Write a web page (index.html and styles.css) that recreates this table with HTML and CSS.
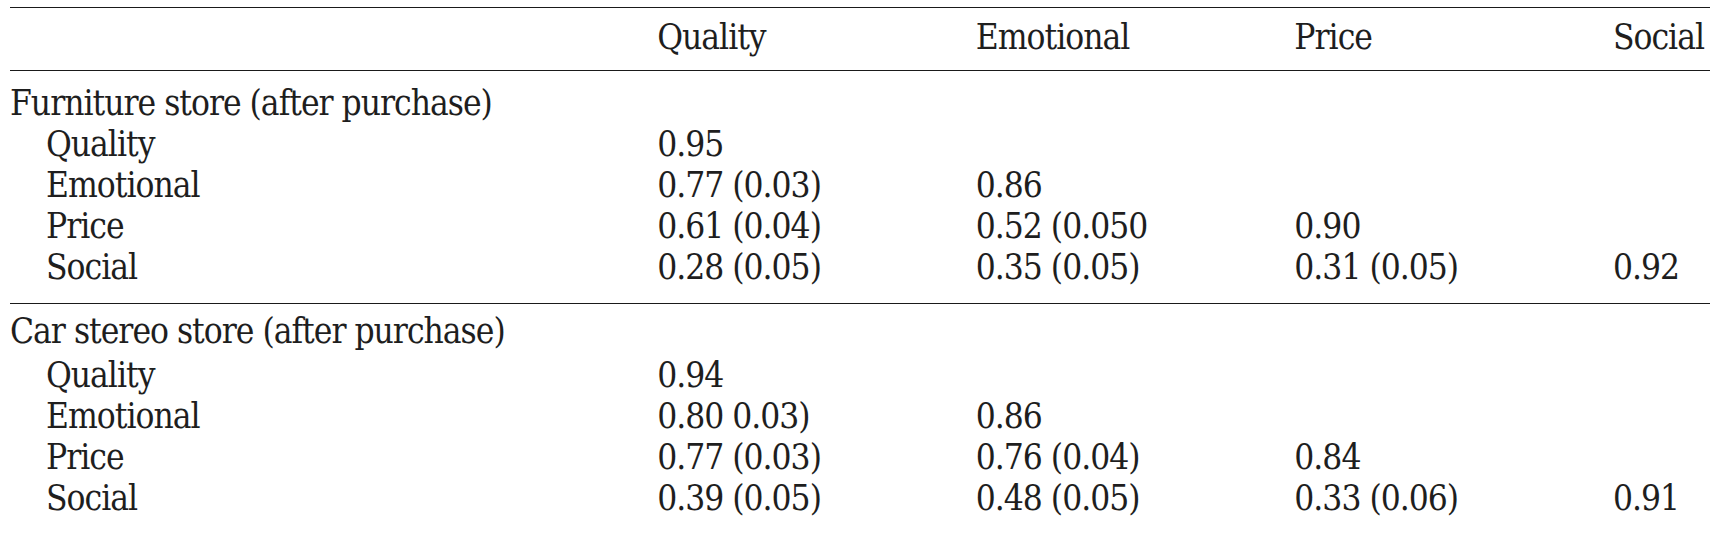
FILE: index.html
```html
<!DOCTYPE html>
<html lang="en">
<head>
<meta charset="utf-8">
<title>Correlations</title>
<link rel="stylesheet" href="styles.css">
</head>
<body>
<table class="corr">
  <colgroup>
    <col class="c-label">
    <col class="c-num">
    <col class="c-num">
    <col class="c-num">
    <col class="c-last">
  </colgroup>
  <thead>
    <tr class="head">
      <th></th>
      <th>Quality</th>
      <th>Emotional</th>
      <th>Price</th>
      <th>Social</th>
    </tr>
  </thead>
  <tbody>
    <tr class="group first">
      <td>Furniture store (after purchase)</td><td></td><td></td><td></td><td></td>
    </tr>
    <tr>
      <td class="sub">Quality</td><td>0.95</td><td></td><td></td><td></td>
    </tr>
    <tr>
      <td class="sub">Emotional</td><td>0.77 (0.03)</td><td>0.86</td><td></td><td></td>
    </tr>
    <tr>
      <td class="sub">Price</td><td>0.61 (0.04)</td><td>0.52 (0.050</td><td>0.90</td><td></td>
    </tr>
    <tr class="end">
      <td class="sub">Social</td><td>0.28 (0.05)</td><td>0.35 (0.05)</td><td>0.31 (0.05)</td><td>0.92</td>
    </tr>
    <tr class="group second">
      <td>Car stereo store (after purchase)</td><td></td><td></td><td></td><td></td>
    </tr>
    <tr>
      <td class="sub">Quality</td><td>0.94</td><td></td><td></td><td></td>
    </tr>
    <tr>
      <td class="sub">Emotional</td><td>0.80 0.03)</td><td>0.86</td><td></td><td></td>
    </tr>
    <tr>
      <td class="sub">Price</td><td>0.77 (0.03)</td><td>0.76 (0.04)</td><td>0.84</td><td></td>
    </tr>
    <tr>
      <td class="sub">Social</td><td>0.39 (0.05)</td><td>0.48 (0.05)</td><td>0.33 (0.06)</td><td>0.91</td>
    </tr>
  </tbody>
</table>
</body>
</html>
```

FILE: styles.css
```css
html, body {
  margin: 0;
  padding: 0;
  background: #ffffff;
}

body {
  padding: 7px 8px 0 10px;
  color: #1e1e1e;
  font-family: "DejaVu Serif Condensed", "DejaVu Serif", "Liberation Serif", serif;
  font-stretch: condensed;
  font-size: 35px;
  letter-spacing: -1px;
  line-height: 41px;
}

.corr {
  width: 1700px;
  border-collapse: collapse;
  table-layout: fixed;
}

.c-label { width: 647px; }
.c-num { width: 318.5px; }
.c-last { width: 97px; }

.corr th,
.corr td {
  padding: 0;
  text-align: left;
  font-weight: normal;
  white-space: nowrap;
  vertical-align: baseline;
}

.corr td.sub {
  padding-left: 36px;
}

.head {
  border-top: 1px solid #1a1a1a;
  border-bottom: 1px solid #1a1a1a;
}

.head th {
  padding-top: 9px;
  padding-bottom: 12px;
}

.group.first td {
  padding-top: 12px;
}

.end {
  border-bottom: 1px solid #1a1a1a;
}

.end td {
  padding-bottom: 15px;
}

.group.second td {
  padding-top: 7px;
  padding-bottom: 3px;
}
```
